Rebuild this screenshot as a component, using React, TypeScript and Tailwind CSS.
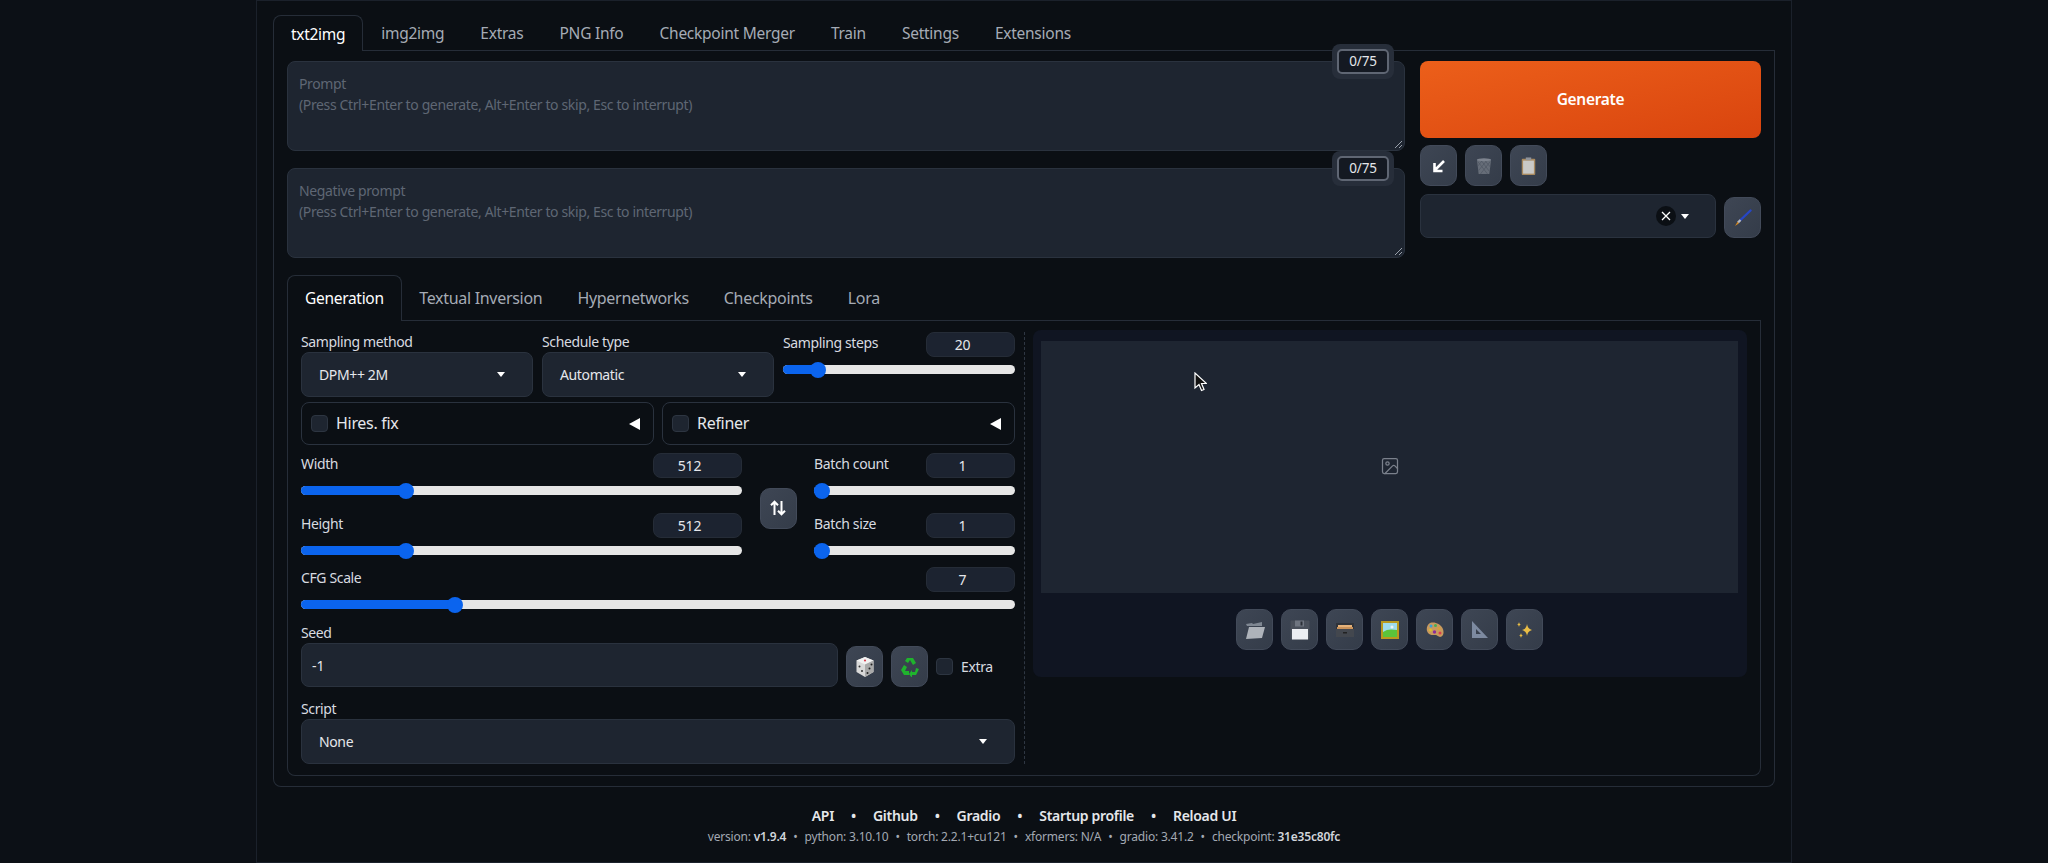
import { Image as ImageIcon } from "lucide-react";
import type { ReactNode } from "react";

const topTabs = ["txt2img", "img2img", "Extras", "PNG Info", "Checkpoint Merger", "Train", "Settings", "Extensions"];
const subTabs = ["Generation", "Textual Inversion", "Hypernetworks", "Checkpoints", "Lora"];

const HINT = "(Press Ctrl+Enter to generate, Alt+Enter to skip, Esc to interrupt)";

function Caret() {
  return <span className="block h-0 w-0 border-x-[4px] border-t-[5px] border-x-transparent border-t-white" />;
}

function IconButton({ children, className = "" }: { children: ReactNode; className?: string }) {
  return (
    <button className={`flex h-[41px] w-[37px] shrink-0 items-center justify-center rounded-[10px] border border-[#424a59] bg-gradient-to-br from-[#3e4654] to-[#343c49] ${className}`}>
      {children}
    </button>
  );
}

function PromptBox({ label }: { label: string }) {
  return (
    <div className="relative h-[90px] rounded-lg border border-[#2a323e] bg-[#1e2530] px-[11px] pt-[11px] text-[14px] leading-[21px] tracking-[-0.37px] text-[#5f6774]">
      <div>{label}</div>
      <div>{HINT}</div>
      {/* token counter */}
      <div className="absolute -top-[18px] right-[10px] rounded-lg bg-[#272e3a] p-[5px]">
        <div className="flex h-[25px] w-[52px] items-center justify-center rounded-[5px] border-2 border-[#5f6673] bg-[#141922] text-[13.5px] tracking-[-0.2px] text-[#e5e7eb]">
          0/75
        </div>
      </div>
      {/* resize handle */}
      <svg className="absolute bottom-[1px] right-[1px]" width="9" height="9" viewBox="0 0 9 9" fill="none" stroke="#9aa1ab" strokeWidth="1">
        <path d="M1 8 8 1M5 8l3-3" />
      </svg>
    </div>
  );
}

function NumberBox({ value }: { value: string }) {
  return (
    <div className="flex h-[25px] w-[89px] shrink-0 items-center justify-center rounded-lg border border-[#252c37] bg-[#1c2330] pr-[16px] text-[14px] tracking-[-0.2px] text-[#e5e7eb]">
      {value}
    </div>
  );
}

function Slider({ label, value, pct }: { label: string; value: string; pct: number }) {
  return (
    <div>
      <div className="flex h-[25px] items-center justify-between">
        <span className="pb-[5px] text-[14px] tracking-[-0.37px] text-[#d8dbe0]">{label}</span>
        <NumberBox value={value} />
      </div>
      <div className="relative flex h-[25px] items-center">
        <div className="h-[9px] w-full rounded-full bg-[#e6e6e6]" />
        <div className="absolute left-0 h-[9px] rounded-l-full bg-[#0b64ee]" style={{ width: `${pct}%` }} />
        <div className="absolute h-4 w-4 -translate-x-1/2 rounded-full bg-[#0b64ee]" style={{ left: `${pct}%` }} />
      </div>
    </div>
  );
}

function Select({ value }: { value: string }) {
  return (
    <div className="flex h-[45px] items-center justify-between rounded-lg border border-[#2a323e] bg-[#1e2530] pl-[17px] pr-[27px] text-[14px] tracking-[-0.37px] text-[#e5e7eb]">
      <span>{value}</span>
      <Caret />
    </div>
  );
}

function Checkbox() {
  return <span className="h-[17px] w-[17px] shrink-0 rounded-[4px] border border-[#2d3541] bg-[#1e2530]" />;
}

function Accordion({ label }: { label: string }) {
  return (
    <div className="flex h-[43px] items-center rounded-lg border border-[#2a323e] pl-[9px] pr-[13px]">
      <Checkbox />
      <span className="ml-[8px] pb-[2px] text-[16px] tracking-[-0.3px] text-[#e5e7eb]">{label}</span>
      <span className="ml-auto h-0 w-0 border-y-[6px] border-r-[11px] border-y-transparent border-r-white" />
    </div>
  );
}

function FieldLabel({ children }: { children: ReactNode }) {
  return <div className="flex h-5 items-center pb-[2px] text-[14px] tracking-[-0.37px] text-[#d8dbe0]">{children}</div>;
}

/* the webui buttons are emoji, no emoji font here so they are drawn */
const Arrow = () => (
  <svg width="14" height="14" viewBox="0 0 14 14" fill="none" stroke="#fff" strokeWidth="2.6">
    <path d="M12 2 3 11M2.5 4v8h8" />
  </svg>
);
const Trash = () => (
  <svg width="16" height="18" viewBox="0 0 18 20">
    <path d="M1 3h16l-2 16H3z" fill="#666d78" />
    <path d="M2 5l11 14M6 4l9 12M10 4l6 7M16 5L5 19M12 4 3 15M7 4 2 10" stroke="#4f5663" strokeWidth="0.8" />
    <ellipse cx="9" cy="3" rx="8" ry="1.6" fill="#7d838e" />
  </svg>
);
const Clipboard = () => (
  <svg width="15" height="18" viewBox="0 0 16 20">
    <rect x="0.5" y="2" width="15" height="18" rx="1" fill="#a98a5f" />
    <rect x="2" y="4" width="12" height="14.5" fill="#c9c9c7" />
    <rect x="5" y="0.5" width="6" height="3" fill="#8f939a" />
  </svg>
);
const Brush = () => (
  <svg width="18" height="18" viewBox="0 0 18 18" fill="none">
    <path d="M16.5 1.5 6.500 11" stroke="#2746c4" strokeWidth="2.400" strokeLinecap="round" />
    <path d="M6.500 11 4 13.500" stroke="#b9bcc4" strokeWidth="2.400" />
    <path d="M3.600 12.800 1 17l3.800-2.600z" fill="#d98a1f" />
  </svg>
);
const Swap = () => (
  <svg width="16" height="16" viewBox="0 0 16 16" fill="none" stroke="#fff" strokeWidth="2">
    <path d="M4.5 15V2M1 5.2l3.5-3.5L8 5.2M11.5 1v13M8 10.800l3.500 3.500 3.500-3.500" />
  </svg>
);
const Dice = () => (
  <svg width="20" height="22" viewBox="0 0 20 22">
    <path d="M10 1 18.500 4.500V16L10 21 1.500 16V4.500z" fill="#d9d9d9" />
    <path d="M10 1 18.500 4.500 10 8.500 1.500 4.500z" fill="#f2f2f2" />
    <path d="M10 8.500 18.500 4.500V16L10 21z" fill="#a9a9a9" />
    <circle cx="10" cy="4.500" r="1.100" fill="#d8404f" />
    <circle cx="4.500" cy="10.500" r="1" fill="#333" />
    <circle cx="7" cy="15" r="1" fill="#333" />
    <circle cx="12.500" cy="17" r="1" fill="#222" />
    <circle cx="14.500" cy="12.500" r="1" fill="#222" />
    <circle cx="16.500" cy="8.500" r="1" fill="#222" />
  </svg>
);
const Recycle = () => (
  <svg width="20" height="20" viewBox="0 0 20 20" fill="#1fb32d">
    <path d="M7 1h6l3 5-3 2-3-5-2 3-3-2z" />
    <path d="M1 13l3-5 3 2-2 4h4v4H4z" />
    <path d="M19 12l-3 6h-4v3l-3-4 3-4v2h3l1-4z" />
  </svg>
);
const FolderOpen = () => (
  <svg width="22" height="20" viewBox="0 0 22 20">
    <path d="M2 4l6-1 1 1 9-2v4H3z" fill="#7f8792" />
    <path d="M5 7h16l-3 11-16 1z" fill="#aeb3ba" />
  </svg>
);
const Floppy = () => (
  <svg width="20" height="20" viewBox="0 0 20 20">
    <rect x="0.500" y="0.500" width="19" height="19" rx="1" fill="#4a505b" />
    <rect x="5" y="0.500" width="9" height="6" fill="#6f7580" />
    <rect x="10.500" y="1.500" width="2" height="4" fill="#2b2f37" />
    <rect x="2" y="9" width="16" height="10.500" fill="#eceef2" />
  </svg>
);
const FileBox = () => (
  <svg width="20" height="16" viewBox="0 0 20 16">
    <rect x="1" y="1" width="18" height="14" fill="#2f333a" />
    <rect x="3" y="3" width="14" height="2" fill="#e5b27a" />
    <rect x="2" y="5" width="16" height="2" fill="#c9925a" />
    <rect x="1" y="7" width="18" height="8" fill="#43474e" />
    <rect x="8" y="10" width="4" height="1.500" fill="#222" />
  </svg>
);
const Picture = () => (
  <svg width="18" height="18" viewBox="0 0 18 18">
    <rect width="18" height="18" fill="#b99a1e" />
    <rect x="2" y="2" width="14" height="14" fill="#9fdcec" />
    <path d="M2 11c4-3 8-3 14-2v7H2z" fill="#5bc43a" />
    <circle cx="11" cy="6" r="1.500" fill="#eef6f8" />
  </svg>
);
const Palette = () => (
  <svg width="18" height="16" viewBox="0 0 18 16">
    <path d="M4 1c5-1.500 10 1 12.500 5 1.500 3 1.500 7-1 8.500-3 1.500-4-2-6.500-1.500C6 13.500 2 12.500 1 9 .2 6 1.500 2 4 1z" fill="#c99a5e" />
    <circle cx="5" cy="4" r="1.500" fill="#3aa0d8" />
    <circle cx="9.500" cy="3.500" r="1.500" fill="#4caf50" />
    <circle cx="4.500" cy="8" r="1.500" fill="#d9c22e" />
    <circle cx="13" cy="6.500" r="1.500" fill="#d8a13a" />
    <circle cx="8.500" cy="10" r="1.700" fill="#8a2f9c" />
    <circle cx="14" cy="11" r="1.500" fill="#d8404f" />
  </svg>
);
const Ruler = () => (
  <svg width="18" height="18" viewBox="0 0 18 18">
    <path d="M1 0 17 17H1zM5 8v5h5z" fill="#7d8aa0" fillRule="evenodd" />
  </svg>
);
const Sparkles = () => (
  <svg width="18" height="18" viewBox="0 0 18 18" fill="#e8bc45">
    <path d="M11 3c.5 3 1.500 5 5 6-3.500 1-4.500 3-5 6-.5-3-1.500-5-5-6 3.500-1 4.500-3 5-6z" />
    <path d="M3 1c.3 1.500.8 2.200 2 2.500-1.200.3-1.700 1-2 2.500-.3-1.500-.8-2.200-2-2.500 1.200-.3 1.700-1 2-2.500z" />
    <path d="M5 12c.3 1.500.8 2.200 2 2.500-1.200.3-1.700 1-2 2.500-.3-1.500-.8-2.200-2-2.500 1.200-.3 1.700-1 2-2.500z" />
  </svg>
);

export default function App() {
  return (
    <div className="flex h-[863px] justify-center overflow-hidden bg-[#0c1016] font-['Noto_Sans',sans-serif]">
      <div className="relative h-[863px] w-[1536px] border border-[#1b212b] bg-[#0b0f14] px-4 pt-[14px]">
        {/* main tabs */}
        <div className="flex h-[36px] border-b border-[#262d38]">
          {topTabs.map((tab, i) => (
            <div
              key={tab}
              className={
                i === 0
                  ? "-mb-px flex h-[36px] items-center rounded-t-lg border border-b-0 border-[#262d38] bg-[#0b0f14] px-[17px] pt-[2px] text-[15.5px] tracking-[-0.3px] text-white"
                  : "flex h-[35px] items-center px-[18px] pt-[2px] text-[15.5px] tracking-[-0.25px] text-[#a5abb5]"
              }
            >
              {tab}
            </div>
          ))}
        </div>

        <div className="h-[736px] rounded-b-lg border-x border-b border-[#262d38] px-[13px] pt-[10px]">
          <div className="flex gap-[15px]">
            <div className="flex w-[1118px] flex-col gap-[17px]">
              <PromptBox label="Prompt" />
              <PromptBox label="Negative prompt" />
            </div>
            <div className="flex w-[341px] flex-col gap-[7px]">
              <button className="h-[77px] rounded-lg bg-gradient-to-br from-[#ec5f1a] to-[#d9440e] pt-px text-[15.5px] font-semibold tracking-[-0.3px] text-white">
                Generate
              </button>
              <div className="flex gap-2">
                <IconButton><Arrow /></IconButton>
                <IconButton><Trash /></IconButton>
                <IconButton><Clipboard /></IconButton>
              </div>
              <div className="mt-px flex items-end gap-2">
                <div className="flex h-[44px] w-[296px] items-center rounded-lg border border-[#2a323e] bg-[#1e2530] pl-[235px]">
                  <span className="flex h-5 w-5 items-center justify-center rounded-full bg-[#0b0f14]">
                    <svg width="10" height="10" viewBox="0 0 10 10" stroke="#fff" strokeWidth="1.300"><path d="M1 1l8 8M9 1 1 9" /></svg>
                  </span>
                  <span className="ml-[5px]"><Caret /></span>
                </div>
                <IconButton className="h-[40px]"><Brush /></IconButton>
              </div>
            </div>
          </div>

          {/* sub tabs */}
          <div className="mt-[17px] flex h-[46px] border-b border-[#262d38]">
            {subTabs.map((tab, i) => (
              <div
                key={tab}
                className={
                  i === 0
                    ? "-mb-px flex h-[46px] items-center rounded-t-lg border border-b-0 border-[#262d38] bg-[#0b0f14] px-[17px] text-[15.5px] tracking-[-0.3px] text-white"
                    : "flex h-[45px] items-center px-[17.5px] text-[16px] tracking-[-0.3px] text-[#a5abb5]"
                }
              >
                {tab}
              </div>
            ))}
          </div>

          <div className="flex h-[455px] rounded-b-lg border-x border-b border-[#262d38] px-[13px] pt-[11px]">
            <div className="flex h-[432px] w-[724px] shrink-0 flex-col border-r border-dashed border-[#2f3743] pr-[9px]">
              <div className="grid grid-cols-3 gap-[9px]">
                <div>
                  <FieldLabel>Sampling method</FieldLabel>
                  <Select value="DPM++ 2M" />
                </div>
                <div>
                  <FieldLabel>Schedule type</FieldLabel>
                  <Select value="Automatic" />
                </div>
                <Slider label="Sampling steps" value="20" pct={15} />
              </div>

              <div className="mt-[5px] grid grid-cols-2 gap-2">
                <Accordion label="Hires. fix" />
                <Accordion label="Refiner" />
              </div>

              <div className="mt-2 flex">
                <div className="flex w-[441px] flex-col gap-[10px]">
                  <Slider label="Width" value="512" pct={23.8} />
                  <Slider label="Height" value="512" pct={23.8} />
                </div>
                <div className="flex w-[72px] items-center justify-center">
                  <IconButton><Swap /></IconButton>
                </div>
                <div className="flex w-[201px] flex-col gap-[10px]">
                  <Slider label="Batch count" value="1" pct={4} />
                  <Slider label="Batch size" value="1" pct={4} />
                </div>
              </div>

              <div className="mt-1">
                <Slider label="CFG Scale" value="7" pct={21.5} />
              </div>

              <div className="mt-[6px]">
                <FieldLabel>Seed</FieldLabel>
                <div className="flex items-end">
                  <div className="flex h-[44px] w-[537px] items-center rounded-lg border border-[#2a323e] bg-[#1e2530] pl-[10px] text-[14px] text-[#e5e7eb]">
                    -1
                  </div>
                  <IconButton className="ml-2"><Dice /></IconButton>
                  <IconButton className="ml-2"><Recycle /></IconButton>
                  <div className="ml-2 flex h-[41px] items-center">
                    <Checkbox />
                    <span className="ml-2 text-[14px] tracking-[-0.37px] text-[#d8dbe0]">Extra</span>
                  </div>
                </div>
              </div>

              <div className="mt-3">
                <FieldLabel>Script</FieldLabel>
                <Select value="None" />
              </div>
            </div>

            {/* result gallery */}
            <div className="ml-2 -mt-[2px] h-[347px] w-[714px] rounded-lg bg-[#101522] pl-2 pr-[9px] pt-[11px]">
              <div className="flex h-[252px] items-center justify-center bg-[#1e2531] pb-[2px]">
                <ImageIcon size={20} strokeWidth={1.5} className="text-[#7b818c]" />
              </div>
              <div className="mt-4 flex justify-center gap-2">
                <IconButton><FolderOpen /></IconButton>
                <IconButton><Floppy /></IconButton>
                <IconButton><FileBox /></IconButton>
                <IconButton><Picture /></IconButton>
                <IconButton><Palette /></IconButton>
                <IconButton><Ruler /></IconButton>
                <IconButton><Sparkles /></IconButton>
              </div>
            </div>
          </div>
        </div>

        {/* footer */}
        <div className="mt-[18px] flex flex-col items-center">
          <div className="flex h-5 items-center gap-[17px] text-[14px] font-semibold tracking-[-0.3px] text-[#e5e7eb]">
            <span>API</span><span>•</span><span>Github</span><span>•</span><span>Gradio</span><span>•</span><span>Startup profile</span><span>•</span><span>Reload UI</span>
          </div>
          <div className="mt-[2px] flex h-5 items-center gap-[7px] text-[12px] tracking-[-0.2px] text-[#a3a9b3]">
            <span>version: <b className="font-semibold text-[#d1d5db]">v1.9.4</b></span><span>•</span>
            <span>python: 3.10.10</span><span>•</span>
            <span>torch: 2.2.1+cu121</span><span>•</span>
            <span>xformers: N/A</span><span>•</span>
            <span>gradio: 3.41.2</span><span>•</span>
            <span>checkpoint: <b className="font-semibold text-[#d1d5db]">31e35c80fc</b></span>
          </div>
        </div>

        {/* mouse pointer */}
        <svg className="absolute left-[937px] top-[371px]" width="13" height="20" viewBox="0 0 13 20">
          <path d="M1 1v15l4-3.500 2.500 6 2.500-1-2.500-6H12.500z" fill="#111" stroke="#fff" strokeWidth="1.200" />
        </svg>
      </div>
    </div>
  );
}
